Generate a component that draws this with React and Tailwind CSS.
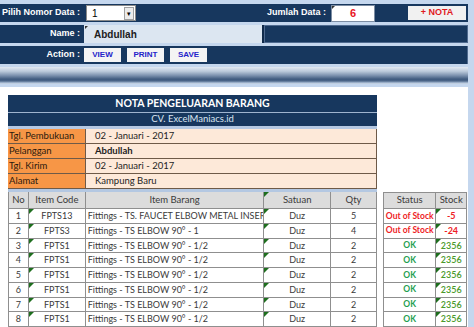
import React from "react";

const rows = [
  { no: 1, code: "FPTS13", item: "Fittings - TS. FAUCET ELBOW METAL INSERT - 1/2", qty: 5, out: true, stock: "-5" },
  { no: 2, code: "FPTS3", item: "Fittings - TS ELBOW 90° - 1", qty: 4, out: true, stock: "-24" },
  { no: 3, code: "FPTS1", item: "Fittings - TS ELBOW 90° - 1/2", qty: 2, out: false, stock: "2356" },
  { no: 4, code: "FPTS1", item: "Fittings - TS ELBOW 90° - 1/2", qty: 2, out: false, stock: "2356" },
  { no: 5, code: "FPTS1", item: "Fittings - TS ELBOW 90° - 1/2", qty: 2, out: false, stock: "2356" },
  { no: 6, code: "FPTS1", item: "Fittings - TS ELBOW 90° - 1/2", qty: 2, out: false, stock: "2356" },
  { no: 7, code: "FPTS1", item: "Fittings - TS ELBOW 90° - 1/2", qty: 2, out: false, stock: "2356" },
  { no: 8, code: "FPTS1", item: "Fittings - TS ELBOW 90° - 1/2", qty: 2, out: false, stock: "2356" },
];

const info = [
  ["Tgl. Pembukuan", "02 - Januari - 2017", false],
  ["Pelanggan", "Abdullah", true],
  ["Tgl. Kirim", "02 - Januari - 2017", false],
  ["Alamat", "Kampung Baru", false],
];

// little green marker excel draws in the corner of a cell
function Tri() {
  return (
    <span className="absolute top-0 left-0 w-0 h-0 border-t-[5px] border-r-[5px] border-t-[#1e6e1e] border-r-transparent" />
  );
}

function TopLabel({ children }) {
  return (
    <span className="w-[82px] shrink-0 text-right pr-[2px] text-white font-bold text-[9px] font-['Liberation_Sans',sans-serif]">
      {children}
    </span>
  );
}

function ActionBtn({ children }) {
  return (
    <div className="w-[37px] h-[14px] bg-[#f4f4f4] flex items-center justify-center text-[#2323c9] text-[8px] font-bold font-['Liberation_Sans',sans-serif]">
      {children}
    </div>
  );
}

const cell = "relative h-full flex items-center border-r border-b border-[#8f8f8f] overflow-hidden whitespace-nowrap";

export default function App() {
  return (
    <div className="w-[474px] h-[327px] overflow-hidden bg-[#c5d7ee] font-['Lato',sans-serif]">
      <div className="pt-[4px] flex flex-col gap-[3px] w-[468px]">
        {/* row 1 */}
        <div className="h-[18px] bg-[#17375e] flex items-center">
          <TopLabel>Pilih Nomor Data :</TopLabel>
          <div className="ml-[4px] w-[50px] h-[16px] bg-white border border-[#8a8a8a] flex items-center justify-between">
            <span className="pl-[5px] text-[10px] text-black font-['Liberation_Sans',sans-serif]">1</span>
            <span className="w-[10px] h-[13px] mr-[1px] bg-[#ececec] border border-[#a0a0a0] flex items-center justify-center text-[7px] text-black leading-none">▾</span>
          </div>
          <div className="flex-1" />
          <span className="text-white font-bold text-[9px] font-['Liberation_Sans',sans-serif]">Jumlah Data :</span>
          <div className="relative ml-[5px] w-[44px] h-[17px] bg-white border border-[#7d8da3] flex items-center justify-center text-[#e8141e] font-bold text-[11px] font-['Liberation_Sans',sans-serif]">
            <span className="absolute top-0 left-0 w-0 h-0 border-t-[3px] border-r-[3px] border-t-[#333] border-r-transparent" />
            6
          </div>
          <div className="w-[33px]" />
          <div className="w-[58px] h-[14px] mr-[2px] bg-[#f1f1f1] flex items-center justify-center text-[#e0191f] font-bold text-[9px] font-['Liberation_Sans',sans-serif]">
            + NOTA
          </div>
        </div>

        {/* row 2 */}
        <div className="h-[18px] bg-[#17375e] flex items-center">
          <TopLabel>Name :</TopLabel>
          <div className="relative ml-[2px] w-[180px] h-full bg-[#dce6f1] border-r-2 border-[#102a4a] flex items-center pl-[10px] text-[10px] font-bold text-[#202020] font-['Liberation_Sans',sans-serif]">
            <span className="absolute top-[1px] left-[1px] w-0 h-0 border-t-[3px] border-r-[3px] border-t-[#333] border-r-transparent" />
            Abdullah
          </div>
          <div className="flex-1 h-full border border-[#4f6a8f] bg-[#17375e]" />
        </div>

        {/* row 3 */}
        <div className="h-[18px] bg-[#17375e] border-r border-[#4f6a8f] flex items-center">
          <TopLabel>Action :</TopLabel>
          <div className="ml-[2px] flex gap-[6px]">
            <ActionBtn>VIEW</ActionBtn>
            <ActionBtn>PRINT</ActionBtn>
            <ActionBtn>SAVE</ActionBtn>
          </div>
        </div>

        {/* bar */}
        <div className="h-[17px] bg-[linear-gradient(to_bottom,#e3eaf3_0%,#bccadb_25%,#7c91ae_50%,#3f5a7e_72%,#4d6789_82%,#9fb3cc_92%,#d4dfec_100%)]" />
      </div>

      <div className="mt-[3px] w-[468px] h-[240px] bg-white pt-[8px] pl-[8px] text-[#333]">
        {/* nota heading */}
        <div className="w-[369px]">
          <div className="h-[17px] bg-[#17375e] flex items-center justify-center text-white font-bold text-[10.5px]">
            NOTA PENGELUARAN BARANG
          </div>
          <div className="h-[14px] bg-[#17375e] border-t border-[#9fb4cf] flex items-center justify-center text-[#dbe5f1] text-[9.5px]">
            CV. ExcelManiacs.id
          </div>
          <div className="h-[3px] bg-[#b4c8e2]" />
          {info.map(([k, v, b]) => (
            <div key={k} className="h-[15px] flex border-b border-[#6e5a48] border-r">
              <div className="w-[77px] bg-[#f79646] pl-[1px] flex items-center text-[9.5px] text-[#2b1a0e]">{k}</div>
              <div className={`flex-1 bg-[#fde9d9] border-l border-[#6e5a48] pl-[9px] flex items-center text-[9.5px] text-[#1e1e1e] ${b ? "font-bold" : ""}`}>
                {v}
              </div>
            </div>
          ))}
          <div className="h-[3px] bg-[#b4c8e2]" />
        </div>

        {/* items */}
        <div className="h-[17px] flex text-[9.5px] text-[#3a3a3a]">
          <div className="w-[369px] flex border-l border-[#8f8f8f] bg-[#dcdcdc]">
            <div className={`${cell} w-[20px] justify-center`}>No</div>
            <div className={`${cell} w-[57px] justify-center`}>Item Code</div>
            <div className={`${cell} w-[179px] justify-center`}>Item Barang</div>
            <div className={`${cell} w-[67px] justify-center`}><Tri />Satuan</div>
            <div className={`${cell} w-[46px] justify-center`}>Qty</div>
          </div>
          <div className="ml-[6px] w-[84px] flex border-l border-t border-[#8f8f8f] bg-[#dcdcdc]">
            <div className={`${cell} w-[53px] justify-center`}>Status</div>
            <div className={`${cell} w-[31px] justify-center`}>Stock</div>
          </div>
        </div>
        {rows.map((r) => (
          <div key={r.no} className="h-[14.75px] flex text-[9px] text-[#3a3a3a]">
            <div className="w-[369px] flex border-l border-[#8f8f8f]">
              <div className={`${cell} w-[20px] justify-center`}>{r.no}</div>
              <div className={`${cell} w-[57px] justify-center`}><Tri />{r.code}</div>
              <div className={`${cell} w-[179px] pl-[2px]`}>{r.item}</div>
              <div className={`${cell} w-[67px] justify-center`}><Tri />Duz</div>
              <div className={`${cell} w-[46px] justify-center`}>{r.qty}</div>
            </div>
            <div className="ml-[6px] w-[84px] flex border-l border-[#8f8f8f] font-bold">
              <div className={`${cell} w-[53px] justify-center text-[8.5px] ${r.out ? "text-[#ee1c25]" : "text-[#1fa050]"}`}>
                {r.out ? "Out of Stock" : "OK"}
              </div>
              <div className={`${cell} w-[31px] justify-center ${r.out ? "text-[#ee1c25]" : "text-[#4b9a2c] font-semibold"}`}>
                <Tri />{r.stock}
              </div>
            </div>
          </div>
        ))}
      </div>
    </div>
  );
}
